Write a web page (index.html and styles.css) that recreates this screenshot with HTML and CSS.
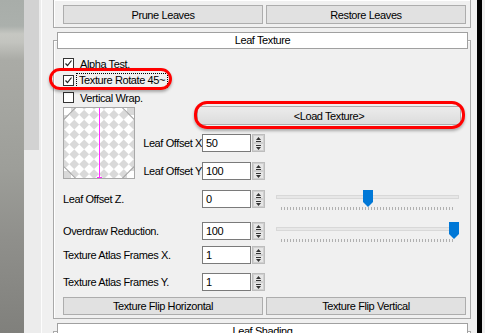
FILE: index.html
```html
<!DOCTYPE html>
<html lang="en">

<head>
    <meta charset="UTF-8">
    <meta name="viewport" content="width=device-width, initial-scale=1.0">
    <title>Leaf Texture</title>
    <link rel="stylesheet" href="styles.css">
</head>

<body>
    <div class="app">
        <div class="viewport"></div>
        <div class="scroll">
            <div class="thumb"></div>
        </div>

        <div class="panel">
            <!-- previous group, cut off at the top -->
            <div class="group prev">
                <div class="btn-row">
                    <button class="btn">Prune Leaves</button>
                    <button class="btn">Restore Leaves</button>
                </div>
            </div>

            <!-- leaf texture -->
            <div class="group">
                <div class="group-title">Leaf Texture</div>
                <div class="checks">
                    <div class="check">
                        <span class="box"><svg width="9" height="9" viewBox="0 0 9 9"><polyline points="1.5,4.5 3.5,6.5 7.5,1.5" /></svg></span>
                        <span>Alpha Test.</span>
                    </div>
                    <div class="check">
                        <span class="box"><svg width="9" height="9" viewBox="0 0 9 9"><polyline points="1.5,4.5 3.5,6.5 7.5,1.5" /></svg></span>
                        <span class="focus">Texture Rotate 45~</span>
                    </div>
                    <div class="check">
                        <span class="box"></span>
                        <span>Vertical Wrap.</span>
                    </div>
                </div>

                <div class="preview-row">
                    <div class="preview">
                        <div class="diamonds"></div>
                        <div class="pivot"></div>
                    </div>
                    <div class="preview-side">
                        <button class="btn load">&lt;Load Texture&gt;</button>
                        <div class="field side">
                            <span class="label">Leaf Offset X</span>
                            <div class="input">50</div>
                            <div class="spin">
                                <div class="spin-btn"><svg width="5" height="5" viewBox="0 0 5 5"><polygon points="2.5,0 5,3 0,3" /><rect x="0" y="4" width="5" height="1" /></svg></div>
                                <div class="spin-btn"><svg width="5" height="5" viewBox="0 0 5 5"><rect x="0" y="0" width="5" height="1" /><polygon points="0,2 5,2 2.5,5" /></svg></div>
                            </div>
                        </div>
                        <div class="field side offset-y">
                            <span class="label">Leaf Offset Y</span>
                            <div class="input">100</div>
                            <div class="spin">
                                <div class="spin-btn"><svg width="5" height="5" viewBox="0 0 5 5"><polygon points="2.5,0 5,3 0,3" /><rect x="0" y="4" width="5" height="1" /></svg></div>
                                <div class="spin-btn"><svg width="5" height="5" viewBox="0 0 5 5"><rect x="0" y="0" width="5" height="1" /><polygon points="0,2 5,2 2.5,5" /></svg></div>
                            </div>
                        </div>
                    </div>
                </div>

                <div class="field slider-row offset-z">
                    <span class="label">Leaf Offset Z.</span>
                    <div class="input">0</div>
                    <div class="spin">
                        <div class="spin-btn"><svg width="5" height="5" viewBox="0 0 5 5"><polygon points="2.5,0 5,3 0,3" /><rect x="0" y="4" width="5" height="1" /></svg></div>
                        <div class="spin-btn"><svg width="5" height="5" viewBox="0 0 5 5"><rect x="0" y="0" width="5" height="1" /><polygon points="0,2 5,2 2.5,5" /></svg></div>
                    </div>
                    <div class="slider">
                        <div class="track"></div>
                        <svg class="knob" style="left: 87px" width="10" height="17" viewBox="0 0 10 17"><polygon points="0,0 10,0 10,12 5,17 0,12" /></svg>
                        <div class="ticks"></div>
                    </div>
                </div>

                <div class="field slider-row overdraw">
                    <span class="label">Overdraw Reduction.</span>
                    <div class="input">100</div>
                    <div class="spin">
                        <div class="spin-btn"><svg width="5" height="5" viewBox="0 0 5 5"><polygon points="2.5,0 5,3 0,3" /><rect x="0" y="4" width="5" height="1" /></svg></div>
                        <div class="spin-btn"><svg width="5" height="5" viewBox="0 0 5 5"><rect x="0" y="0" width="5" height="1" /><polygon points="0,2 5,2 2.5,5" /></svg></div>
                    </div>
                    <div class="slider">
                        <div class="track"></div>
                        <svg class="knob" style="left: 173px" width="10" height="17" viewBox="0 0 10 17"><polygon points="0,0 10,0 10,12 5,17 0,12" /></svg>
                        <div class="ticks"></div>
                    </div>
                </div>

                <div class="field frames-x">
                    <span class="label">Texture Atlas Frames X.</span>
                    <div class="input">1</div>
                    <div class="spin">
                        <div class="spin-btn"><svg width="5" height="5" viewBox="0 0 5 5"><polygon points="2.5,0 5,3 0,3" /><rect x="0" y="4" width="5" height="1" /></svg></div>
                        <div class="spin-btn"><svg width="5" height="5" viewBox="0 0 5 5"><rect x="0" y="0" width="5" height="1" /><polygon points="0,2 5,2 2.5,5" /></svg></div>
                    </div>
                </div>

                <div class="field frames-y">
                    <span class="label">Texture Atlas Frames Y.</span>
                    <div class="input">1</div>
                    <div class="spin">
                        <div class="spin-btn"><svg width="5" height="5" viewBox="0 0 5 5"><polygon points="2.5,0 5,3 0,3" /><rect x="0" y="4" width="5" height="1" /></svg></div>
                        <div class="spin-btn"><svg width="5" height="5" viewBox="0 0 5 5"><rect x="0" y="0" width="5" height="1" /><polygon points="0,2 5,2 2.5,5" /></svg></div>
                    </div>
                </div>

                <div class="btn-row flip">
                    <button class="btn">Texture Flip Horizontal</button>
                    <button class="btn">Texture Flip Vertical</button>
                </div>
            </div>

            <!-- next group, cut off at the bottom -->
            <div class="group next">
                <div class="group-title">Leaf Shading</div>
            </div>
        </div>

        <div class="edge"></div>

        <!-- red highlight marks drawn over the screenshot -->
        <div class="mark mark-rotate"></div>
        <div class="mark mark-load"></div>
    </div>
</body>

</html>
```

FILE: styles.css
```css
* {
    margin: 0;
    padding: 0;
    box-sizing: border-box;
}

body {
    width: 485px;
    height: 333px;
    overflow: hidden;
    background-color: #f0f0f0;
    font-family: "Liberation Sans", Arial, sans-serif;
    font-size: 11px;
    letter-spacing: -0.4px;
    color: #000;
}

.app {
    position: relative;
    display: flex;
    height: 333px;
}

.viewport {
    width: 24px;
    background: linear-gradient(180deg, #a8ada9 0, #abb0ac 26px, #c6c7c2 34px, #c3c4bf 42px, #aaaba6 60px, #9d9e99 170px, #8f8f8b 240px, #80807c 333px);
}

.scroll {
    width: 17px;
    background-color: #ececec;
}

.thumb {
    width: 15px;
    height: 150px;
    background-color: #d2d2d2;
}

.panel {
    width: 436px;
    border-left: 1px solid #fdfdfd;
    background-color: #f0f0f0;
}

.edge {
    width: 5px;
    background-color: #000;
}

/* group boxes */

.group {
    width: 418px;
    margin-left: 11px;
    margin-top: 12px;
    padding: 0 4px 3px 9px;
    border: 1px solid #a9a9a9;
    box-shadow: inset 1px 1px 0 #fff;
}

.group.prev {
    margin-top: 0;
    border-top: none;
    padding-top: 5px;
}

.group.next {
    height: 20px;
}

.group-title {
    height: 17px;
    margin: -9px -2px 0 -6px;
    border: 1px solid #a0a0a0;
    background-color: #fff;
    text-align: center;
    line-height: 15px;
}

/* buttons */

.btn-row {
    display: flex;
    gap: 3px;
}

.btn {
    height: 19px;
    flex: 1;
    border: 1px solid #adadad;
    background-color: #e1e1e1;
    font: inherit;
    letter-spacing: inherit;
    color: #000;
}

.btn-row.flip {
    margin-top: 6px;
}

.btn-row.flip .btn {
    height: 18px;
}

.btn.load {
    display: block;
    width: 264px;
    margin-left: 62px;
    height: 19px;
    background: linear-gradient(180deg, #ececec, #dcdcdc);
}

/* check boxes */

.checks {
    margin-top: 6px;
}

.check {
    display: flex;
    align-items: center;
    height: 17px;
}

.box {
    display: flex;
    align-items: center;
    justify-content: center;
    width: 11px;
    height: 11px;
    margin-right: 6px;
    border: 1px solid #333;
    background-color: #fff;
}

.box polyline {
    fill: none;
    stroke: #222;
    stroke-width: 1.2;
}

.focus {
    margin-left: -3px;
    padding: 0 2px;
    outline: 1px dotted #000;
    line-height: 13px;
}

/* texture preview */

.preview-row {
    display: flex;
    height: 74px;
}

.preview {
    position: relative;
    width: 72px;
    height: 72px;
    margin-top: 1px;
    overflow: hidden;
    border: 1px solid #a8a8a8;
    background: conic-gradient(#d9d9d9 25%, #fff 0 50%, #d9d9d9 0 75%, #fff 0) 0 0 / 14px 14px;
}

.diamonds {
    position: absolute;
    left: -7px;
    top: -7px;
    width: 84px;
    height: 84px;
    transform: rotate(45deg);
    border: 1px solid #a4a4a4;
    background: conic-gradient(#d9d9d9 25%, #fff 0 50%, #d9d9d9 0 75%, #fff 0) 0 0 / 14px 14px;
}

.pivot {
    position: absolute;
    left: 35px;
    top: 0;
    width: 1px;
    height: 69px;
    background-color: #ff2bff;
}

.pivot::after {
    content: "";
    position: absolute;
    left: -2px;
    bottom: -2px;
    width: 5px;
    height: 2px;
    background-color: #ff2bff;
}

.preview-side {
    flex: 1;
}

/* number fields */

.field {
    display: flex;
    align-items: flex-start;
    height: 18px;
}

.label {
    width: 139px;
    line-height: 18px;
    white-space: nowrap;
}

.field.side {
    margin-top: 9px;
}

.field.side .label {
    width: 67px;
    text-align: right;
}

.field.offset-y {
    margin-top: 10px;
}

.input {
    width: 49px;
    height: 18px;
    padding-left: 3px;
    border: 1px solid #7a7a7a;
    background-color: #fff;
    line-height: 16px;
}

.spin {
    display: flex;
    flex-direction: column;
    width: 13px;
    height: 18px;
    margin-left: 1px;
    border: 1px solid #bdbdbd;
    background-color: #fff;
}

.spin-btn {
    display: flex;
    align-items: center;
    justify-content: center;
    flex: 1;
    border: 1px solid #d0d0d0;
    background-color: #e6e6e6;
}

.spin-btn svg {
    fill: #333;
}

/* sliders */

.slider-row {
    height: 21px;
}

.offset-z {
    margin-top: 10px;
}

.overdraw {
    margin-top: 11px;
}

.frames-x {
    margin-top: 3px;
}

.frames-y {
    margin-top: 9px;
}

.slider {
    position: relative;
    width: 183px;
    height: 21px;
    margin-left: 11px;
}

.track {
    position: absolute;
    left: 0;
    right: 0;
    top: 5px;
    height: 4px;
    border: 1px solid #d8d8d8;
    background-color: #e7e7e7;
}

.knob {
    position: absolute;
    top: 0;
    fill: #0078d7;
}

.ticks {
    position: absolute;
    left: 5px;
    width: 173px;
    top: 17px;
    height: 3px;
    background: repeating-linear-gradient(90deg, #b0b0b0 0 1px, transparent 1px 3px);
}

/* red highlights */

.mark {
    position: absolute;
    border: 3px solid #f00;
    box-shadow: 0 2px 3px rgba(0, 0, 0, 0.3);
}

.mark-rotate {
    left: 49px;
    top: 68px;
    width: 123px;
    height: 22px;
    border-radius: 11px;
}

.mark-load {
    left: 194px;
    top: 101px;
    width: 271px;
    height: 28px;
    border-radius: 13px;
}
```
